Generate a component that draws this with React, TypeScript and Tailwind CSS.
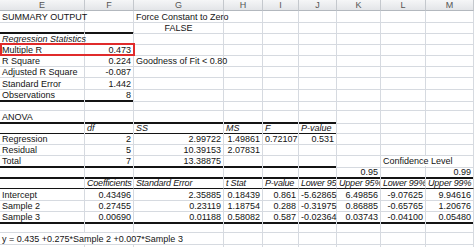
import React from "react";

// Spreadsheet view of a regression summary (columns E..M)

type Cell = {
  t?: string;
  a?: "l" | "r" | "c";
  i?: boolean;
  span?: number;
  clip?: boolean;
};

type Row = {
  cells: Cell[];
  // bottom border across the first `to` columns
  line?: { to: number; w: "thin" | "med" };
};

const COLS = ["E", "F", "G", "H", "I", "J", "K", "L", "M"];
const GRID = "grid grid-cols-[85px_49px_90px_39px_36px_38px_44px_45px_48px]";

const n = (t: string): Cell => ({ t, a: "r" });
const h = (t: string): Cell => ({ t, i: true });
const hc = (t: string): Cell => ({ t, i: true, clip: true });
const e: Cell = {};

const fill = (cells: Cell[]): Cell[] => {
  let used = cells.reduce((s, c) => s + (c.span ?? 1), 0);
  const out = [...cells];
  while (used < 9) {
    out.push({});
    used++;
  }
  return out;
};

const rows: Row[] = [
  { cells: fill([{ t: "SUMMARY OUTPUT" }, e, { t: "Force Constant to Zero", a: "c" }]) },
  { cells: fill([e, e, { t: "FALSE", a: "c" }]), line: { to: 2, w: "med" } },
  { cells: fill([h("Regression Statistics")]), line: { to: 2, w: "thin" } },
  { cells: fill([{ t: "Multiple R" }, n("0.473")]) },
  { cells: fill([{ t: "R Square" }, n("0.224"), { t: "Goodness of Fit < 0.80" }]) },
  { cells: fill([{ t: "Adjusted R Square" }, n("-0.087")]) },
  { cells: fill([{ t: "Standard Error" }, n("1.442")]) },
  { cells: fill([{ t: "Observations" }, n("8")]), line: { to: 2, w: "med" } },
  { cells: fill([]) },
  { cells: fill([{ t: "ANOVA" }]), line: { to: 6, w: "med" } },
  { cells: fill([e, h("df"), h("SS"), h("MS"), h("F"), h("P-value")]), line: { to: 6, w: "thin" } },
  { cells: fill([{ t: "Regression" }, n("2"), n("2.99722"), n("1.49861"), n("0.72107"), n("0.531")]) },
  { cells: fill([{ t: "Residual" }, n("5"), n("10.39153"), n("2.07831")]) },
  {
    cells: fill([{ t: "Total" }, n("7"), n("13.38875"), e, e, e, e, { t: "Confidence Level", span: 2 }]),
    line: { to: 6, w: "med" },
  },
  { cells: fill([e, e, e, e, e, e, n("0.95"), e, n("0.99")]), line: { to: 9, w: "med" } },
  {
    cells: [
      e,
      hc("Coefficients"),
      hc("Standard Error"),
      hc("t Stat"),
      hc("P-value"),
      hc("Lower 95%"),
      hc("Upper 95%"),
      hc("Lower 99%"),
      hc("Upper 99%"),
    ],
    line: { to: 9, w: "thin" },
  },
  {
    cells: [
      { t: "Intercept" },
      n("0.43496"),
      n("2.35885"),
      n("0.18439"),
      n("0.861"),
      n("-5.62865"),
      n("6.49856"),
      n("-9.07625"),
      n("9.94616"),
    ],
  },
  {
    cells: [
      { t: "Sample 2" },
      n("0.27455"),
      n("0.23119"),
      n("1.18754"),
      n("0.288"),
      n("-0.31975"),
      n("0.86885"),
      n("-0.65765"),
      n("1.20676"),
    ],
  },
  {
    cells: [
      { t: "Sample 3" },
      n("0.00690"),
      n("0.01188"),
      n("0.58082"),
      n("0.587"),
      n("-0.02364"),
      n("0.03743"),
      n("-0.04100"),
      n("0.05480"),
    ],
    line: { to: 9, w: "med" },
  },
  { cells: fill([]) },
  { cells: fill([{ t: "y = 0.435 +0.275*Sample 2 +0.007*Sample 3", span: 3 }]) },
  { cells: fill([]) },
];

const spanClass = (s?: number) =>
  s === 2 ? "col-span-2" : s === 3 ? "col-span-3" : "";

const alignClass = (a?: Cell["a"]) =>
  a === "r" ? "text-right" : a === "c" ? "text-center" : "text-left";

function SheetRow({ row }: { row: Row }) {
  let col = 0;
  return (
    <div className={`${GRID} h-[11.1px]`}>
      {row.cells.map((c, idx) => {
        const start = col;
        col += c.span ?? 1;
        const ruled = row.line && start < row.line.to;
        const bottom = !ruled
          ? "border-b border-b-[#d6dae0]"
          : row.line!.w === "med"
          ? "border-b-2 border-b-[#141414]"
          : "border-b border-b-[#141414]";
        return (
          <div
            key={idx}
            className={[
              "min-w-0 whitespace-nowrap border-r border-r-[#d6dae0] px-[2px] pt-[1px] leading-[10px]",
              bottom,
              spanClass(c.span),
              alignClass(c.a),
              c.i ? "italic" : "",
              c.clip ? "overflow-hidden tracking-[-0.2px]" : "",
            ].join(" ")}
          >
            {c.t}
          </div>
        );
      })}
    </div>
  );
}

export default function App() {
  return (
    <div className="relative h-[247px] w-[474px] overflow-hidden bg-white font-['Liberation_Sans',Arial,sans-serif] text-[9px] text-[#141414]">
      <div className={`${GRID} h-[11px]`}>
        {COLS.map((c) => (
          <div
            key={c}
            className="border-r border-b border-r-[#c4c8cd] border-b-[#b3b8be] bg-linear-to-b from-[#f5f6f7] to-[#e3e5e8] text-center leading-[10px] text-[#555]"
          >
            {c}
          </div>
        ))}
      </div>
      {rows.map((r, i) => (
        <SheetRow key={i} row={r} />
      ))}
      {/* highlight box drawn over Multiple R */}
      <div className="pointer-events-none absolute left-0 top-[43px] h-[13px] w-[135px] border-2 border-[#e02b2b]" />
    </div>
  );
}
